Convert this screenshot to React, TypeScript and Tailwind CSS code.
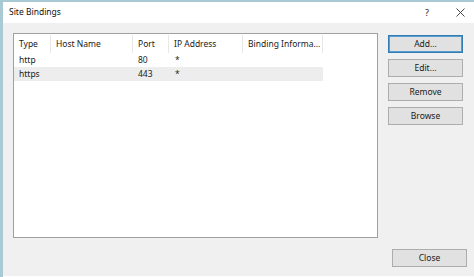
const font = { fontFamily: '"Noto Sans", "Open Sans", sans-serif' };

const columns = [
  { label: 'Type', width: 'w-[37px]' },
  { label: 'Host Name', width: 'w-[82px]' },
  { label: 'Port', width: 'w-[36px]' },
  { label: 'IP Address', width: 'w-[74px]' },
  { label: 'Binding Informa...', width: 'w-[80px]' },
];

const rows = [
  { type: 'http', host: '', port: '80', ip: '*', info: '', selected: false },
  { type: 'https', host: '', port: '443', ip: '*', info: '', selected: true },
];

const Button = ({ label, focused }: { label: string; focused?: boolean }) => (
  <button
    className={
      'w-[75px] h-[18px] flex items-center justify-center text-[8.5px] leading-none text-[#1a1a1a] bg-[#e1e1e1] border ' +
      (focused ? 'border-[#2f7db4] shadow-[inset_0_0_0_1px_#5a9ccb]' : 'border-[#adadad]')
    }
  >
    {label}
  </button>
);

const App = () => {
  return (
    <div className="w-[474px] h-[277px] bg-[#a9c9d5] pl-[3px] pt-[2px] overflow-hidden" style={font}>
      <div className="w-[471px] h-[275px] flex flex-col bg-[#f0f0f0] border-b border-white">
        {/* title bar */}
        <div className="h-[21px] bg-white flex items-center pl-[6px] text-[8.5px] text-[#111]">
          <span>Site Bindings</span>
          <span className="ml-auto text-[9px] text-[#222] w-[10px] text-center">?</span>
          <svg className="ml-[24px] mr-[9px]" width="9" height="9" viewBox="0 0 9 9">
            <path d="M0.5 0.5L8.5 8.5M8.5 0.5L0.5 8.5" stroke="#333" strokeWidth="0.9" />
          </svg>
        </div>

        <div className="flex flex-col pl-[10px] pt-[10px]">
          <div className="flex">
            {/* list */}
            <div className="w-[365px] h-[205px] bg-white border border-[#a0a0a0]">
              <div className="flex h-[19px] pt-[1px]">
                {columns.map((c) => (
                  <div
                    key={c.label}
                    className={c.width + ' h-full flex items-center pl-[5px] border-r border-[#e8e8e8] text-[8.5px] text-[#1a1a1a] whitespace-nowrap overflow-hidden'}
                  >
                    {c.label}
                  </div>
                ))}
              </div>
              {rows.map((r) => (
                <div
                  key={r.type}
                  className={'flex w-[309px] h-[14px] items-center text-[8.5px] text-[#1a1a1a] ' + (r.selected ? 'bg-[#ededed]' : '')}
                >
                  <div className="w-[37px] pl-[5px]">{r.type}</div>
                  <div className="w-[82px] pl-[5px]">{r.host}</div>
                  <div className="w-[36px] pl-[5px]">{r.port}</div>
                  <div className="w-[74px] pl-[6px]">{r.ip}</div>
                  <div className="w-[80px] pl-[5px]">{r.info}</div>
                </div>
              ))}
            </div>

            {/* side buttons */}
            <div className="flex flex-col gap-[6px] ml-[10px] pt-[2px]">
              <Button label="Add..." focused />
              <Button label="Edit..." />
              <Button label="Remove" />
              <Button label="Browse" />
            </div>
          </div>

          <div className="flex justify-end pt-[11px] pr-[7px]">
            <Button label="Close" />
          </div>
        </div>
      </div>
    </div>
  );
};

export default App;
